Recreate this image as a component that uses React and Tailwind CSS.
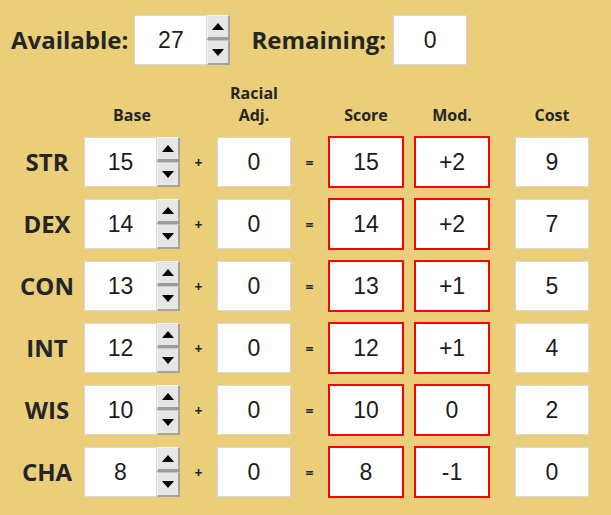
import React from "react";

const stats = [
  { name: "STR", base: 15, racial: 0, score: 15, mod: "+2", cost: 9 },
  { name: "DEX", base: 14, racial: 0, score: 14, mod: "+2", cost: 7 },
  { name: "CON", base: 13, racial: 0, score: 13, mod: "+1", cost: 5 },
  { name: "INT", base: 12, racial: 0, score: 12, mod: "+1", cost: 4 },
  { name: "WIS", base: 10, racial: 0, score: 10, mod: "0", cost: 2 },
  { name: "CHA", base: 8, racial: 0, score: 8, mod: "-1", cost: 0 },
];

function Arrow({ up }) {
  return (
    <svg width="12" height="7" viewBox="0 0 12 7" className="block">
      {up ? <polygon points="6,0 12,7 0,7" fill="#000" /> : <polygon points="0,0 12,0 6,7" fill="#000" />}
    </svg>
  );
}

function Spinner() {
  return (
    <div className="flex h-[50px] w-[23px] flex-col">
      <div className="flex h-[25px] items-center justify-center border-t border-l border-t-[#f4f4f4] border-l-[#f4f4f4] border-r-2 border-r-[#a3a3a3] border-b-[3px] border-b-[#9c9c9c] bg-[#e6e6e6]">
        <Arrow up />
      </div>
      <div className="flex h-[25px] items-center justify-center border-t border-t-[#c9c9c9] border-l border-l-[#f4f4f4] border-r-2 border-r-[#a3a3a3] border-b-2 border-b-[#a3a3a3] bg-[#e6e6e6]">
        <Arrow />
      </div>
    </div>
  );
}

function Box({ value, width = "w-[74px]", red = false }) {
  return (
    <div
      className={
        red
          ? "flex h-[52px] w-[76px] items-center justify-center border-2 border-[#ff0000] bg-white text-[23px] text-[#1c1c1c]"
          : `flex h-[50px] ${width} items-center justify-center border border-[#d8d8d8] bg-white text-[23px] text-[#1c1c1c]`
      }
      style={{ fontFamily: "'Liberation Sans', Arial, sans-serif" }}
    >
      {value}
    </div>
  );
}

function SpinBox({ value }) {
  return (
    <div className="flex items-center">
      <Box value={value} width="w-[73px]" />
      <Spinner />
    </div>
  );
}

export default function App() {
  return (
    <div
      className="h-[515px] w-[611px] overflow-hidden bg-[#eace7a] pt-[15px] text-[#252525]"
      style={{ fontFamily: "'Open Sans', sans-serif" }}
    >
      <div className="flex h-[50px] items-center pl-[11px]">
        <div className="mr-[6px] text-[24px] font-bold">Available:</div>
        <SpinBox value={27} />
        <div className="ml-[21px] mr-[7px] text-[24px] font-bold">Remaining:</div>
        <Box value={0} />
      </div>

      <div className="mt-[17px] flex h-[44px] items-end pl-[10px] text-[16px] font-bold leading-[22px]">
        <div className="w-[74px]" />
        <div className="w-[96px] text-center">Base</div>
        <div className="w-[37px]" />
        <div className="w-[74px] text-center">
          Racial
          <br />
          Adj.
        </div>
        <div className="w-[37px]" />
        <div className="w-[76px] text-center">Score</div>
        <div className="ml-[10px] w-[76px] text-center">Mod.</div>
        <div className="ml-[25px] w-[74px] text-center">Cost</div>
      </div>

      <div className="mt-[5px]">
        {stats.map((s) => (
          <div key={s.name} className="flex h-[62px] items-center pl-[10px]">
            <div className="w-[74px] text-center text-[24px] font-bold">{s.name}</div>
            <SpinBox value={s.base} />
            <div className="w-[37px] text-center text-[14px] font-bold">+</div>
            <Box value={s.racial} />
            <div className="w-[37px] text-center text-[14px] font-bold">=</div>
            <Box value={s.score} red />
            <div className="ml-[10px]">
              <Box value={s.mod} red />
            </div>
            <div className="ml-[25px]">
              <Box value={s.cost} />
            </div>
          </div>
        ))}
      </div>
    </div>
  );
}
